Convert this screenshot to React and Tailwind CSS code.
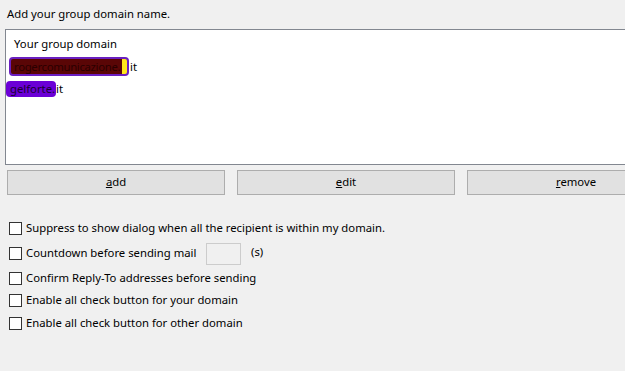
import React from "react";

function Check({ children }) {
  return (
    <span className="flex items-center">
      <span className="ml-[9px] w-[13px] h-[13px] border border-[#333333] bg-white shrink-0" />
      <span className="ml-[4px] text-[#000000] whitespace-nowrap">{children}</span>
    </span>
  );
}

export default function App() {
  return (
    <div
      className="w-[625px] h-[371px] bg-[#f0f0f0] overflow-hidden text-[11.3px] text-black"
      style={{ fontFamily: '"Noto Sans", "Open Sans", sans-serif' }}
    >
      <div className="h-[29px] pl-[7px] pt-[6px] leading-[16px] whitespace-nowrap">
        Add your group domain name.
      </div>

      <div className="ml-[5px] w-[650px] h-[136px] bg-white border border-[#828790] pt-[3px] leading-[22px]">
        <div className="pl-[8px]">Your group domain</div>
        <div className="pl-[5px] flex items-center h-[23px]">
          <span className="inline-flex items-center w-[116px] h-[15px] pl-[3px] overflow-hidden whitespace-nowrap bg-[#5a0606] text-[#2a0000] rounded-[2px] shadow-[0_0_0_2px_#6a1fc0] border-r-[5px] border-[#ffe81a] leading-[15px] tracking-[-0.3px]">
            rogercomunicazione.
          </span>
          <span className="ml-[3px]">it</span>
        </div>
        <div className="flex items-center h-[22px]">
          <span className="inline-flex items-center h-[16px] pl-[4px] pr-[1px] bg-[#6b00d6] text-[#1a0033] rounded-[4px] leading-[16px]">
            gelforte.
          </span>
          <span>it</span>
        </div>
      </div>

      <div className="mt-[5px] pl-[7px] flex gap-[12px]">
        <div className="w-[218px] h-[25px] shrink-0 bg-[#e1e1e1] border border-[#adadad] flex items-center justify-center">
          <span><span className="underline">a</span>dd</span>
        </div>
        <div className="w-[218px] h-[25px] shrink-0 bg-[#e1e1e1] border border-[#adadad] flex items-center justify-center">
          <span><span className="underline">e</span>dit</span>
        </div>
        <div className="w-[218px] h-[25px] shrink-0 bg-[#e1e1e1] border border-[#adadad] flex items-center justify-center">
          <span><span className="underline">r</span>emove</span>
        </div>
      </div>

      <div className="mt-[21px] flex flex-col">
        <div className="h-[25px] flex items-center">
          <Check>Suppress to show dialog when all the recipient is within my domain.</Check>
        </div>
        <div className="h-[25px] flex items-center">
          <span className="ml-[9px] w-[13px] h-[13px] border border-[#333333] bg-white shrink-0" />
          <span className="ml-[4px] w-[180px] shrink-0 whitespace-nowrap">Countdown before sending mail</span>
          <span className="w-[35px] h-[22px] border border-[#cccccc] bg-[#f0f0f0] shrink-0" />
          <span className="ml-[10px] self-start mt-[3px]">(s)</span>
        </div>
        <div className="h-[24px] flex items-center">
          <Check>Confirm Reply-To addresses before sending</Check>
        </div>
        <div className="h-[21px] flex items-center">
          <Check>Enable all check button for your domain</Check>
        </div>
        <div className="h-[25px] flex items-center">
          <Check>Enable all check button for other domain</Check>
        </div>
      </div>
    </div>
  );
}
